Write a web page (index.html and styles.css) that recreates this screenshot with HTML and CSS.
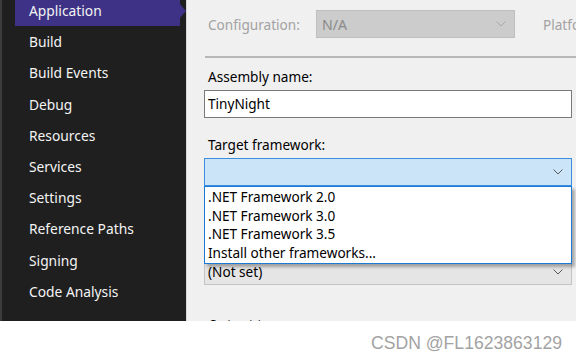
FILE: index.html
```html
<!DOCTYPE html>
<html lang="en">
<head>
<meta charset="utf-8">
<title>Application properties</title>
<link rel="stylesheet" href="styles.css">
</head>
<body>
<div class="window">
    <ul class="sidebar">
        <li class="on">Application</li>
        <li>Build</li>
        <li>Build Events</li>
        <li>Debug</li>
        <li>Resources</li>
        <li>Services</li>
        <li>Settings</li>
        <li>Reference Paths</li>
        <li>Signing</li>
        <li>Code Analysis</li>
    </ul>
    <div class="panel">
        <div class="config">
            <span class="config-label">Configuration:</span>
            <div class="combo disabled">
                <span>N/A</span>
                <svg width="10" height="6" viewBox="0 0 10 6"><polyline points="0.5,0.5 5,5 9.5,0.5" fill="none" stroke="#a8a8a8" stroke-width="1"/></svg>
            </div>
            <span class="config-label platform">Platform:</span>
        </div>
        <hr class="sep">
        <label class="field-label">Assembly name:</label>
        <div class="textbox">TinyNight</div>
        <label class="field-label">Target framework:</label>
        <div class="drop-wrap">
            <div class="combo selected">
                <span></span>
                <svg width="10" height="6" viewBox="0 0 10 6"><polyline points="0.5,0.5 5,5 9.5,0.5" fill="none" stroke="#5a5a5a" stroke-width="1"/></svg>
            </div>
            <ul class="droplist">
                <li>.NET Framework 2.0</li>
                <li>.NET Framework 3.0</li>
                <li>.NET Framework 3.5</li>
                <li>Install other frameworks...</li>
            </ul>
            <div class="combo plain">
                <span>(Not set)</span>
                <svg width="10" height="6" viewBox="0 0 10 6"><polyline points="0.5,0.5 5,5 9.5,0.5" fill="none" stroke="#5a5a5a" stroke-width="1"/></svg>
            </div>
        </div>
        <label class="field-label next">Output type:</label>
    </div>
</div>
<div class="footer">
    <div class="mark">CSDN @FL1623863129</div>
    <p class="cut">it should build the project and then install the target framework it lists</p>
</div>
</body>
</html>
```
FILE: styles.css
```css
body{ margin: 0; padding: 0; background: #fff; }
*{ box-sizing: border-box; }
ul{ margin: 0; padding: 0; list-style: none; }

.window{ display: flex; height: 321px; overflow: hidden; }

/* left nav */
.sidebar{
    width: 186px; flex: none; background: #1f1f1f; border-left: 2px solid #3c3c3c;
    padding: 0 6px 0 13px; margin-top: -5px;
    font-family: "Noto Sans", sans-serif; font-size: 13.8px; color: #f4f4f4;
}
.sidebar > li{ height: 31.2px; line-height: 31.2px; padding-left: 14px; }
.sidebar > li.on{ background: #3d3285; position: relative; }
.sidebar > li.on::after{
    content: ""; position: absolute; right: -6px; top: 9px;
    border-left: 6px solid #3d3285; border-top: 7px solid transparent; border-bottom: 7px solid transparent;
}

/* right panel */
.panel{
    flex: 1; background: #f0f0f0; border-left: 1px solid #d8d8d8;
    padding: 10px 0 0 17px;
    font-family: "Noto Sans", sans-serif; font-size: 13.6px; color: #000;
}
.config{ display: flex; align-items: center; height: 28px; }
.config-label{ color: #a2a2a2; width: 112px; padding-left: 4px; }
.config-label.platform{ width: auto; margin-left: 24px; white-space: nowrap; }
.sep{ margin: 18px 0 0 1px; border: 0; border-top: 2px solid #b8b8b8; height: 0; }

.field-label{ display: block; height: 20px; line-height: 20px; padding-left: 4px; margin-top: 9px; }
.field-label.next{ margin-top: 30px; }

.textbox{
    width: 368px; height: 28px; margin-top: 3px; background: #fff; border: 1px solid #7a7a7a;
    line-height: 26px; padding-left: 3px;
}
.textbox + .field-label{ margin-top: 17px; }

.combo{
    display: flex; align-items: center; justify-content: space-between;
    height: 28px; padding: 0 8px 0 3px; border: 1px solid #adadad;
}
.combo.disabled{ width: 199px; background: #cccccc; border-color: #bfbfbf; color: #8a8a8a; font-size: 14.2px; padding-left: 5px; }
.combo.selected{ width: 368px; height: 28px; background: #cce4f7; border-color: #3c8ddb; }
.combo.plain{ width: 368px; height: 27px; margin-top: 72px; background: #e5e5e5; border-color: #c4c4c4; }

.drop-wrap{ position: relative; margin-top: 3px; }
.droplist{
    position: absolute; left: 0; top: 28px; width: 368px; z-index: 2;
    background: #fff; border: 1px solid #1a7ad4; padding: 1px 0 1px 3px;
    box-shadow: 3px 3px 3px rgba(0,0,0,0.3);
}
.droplist > li{ height: 18.5px; line-height: 18.5px; }

/* below the screenshot */
.footer{ height: 38px; overflow: hidden; }
.mark{
    text-align: right; padding-right: 14px; padding-top: 12px;
    font-family: "Liberation Sans", Arial, sans-serif; font-size: 17.6px; color: #a3a3a3; line-height: 20px;
}
.cut{
    margin: 3px 0 0 8px; white-space: nowrap;
    font-family: "Liberation Sans", Arial, sans-serif; font-size: 17px; color: #222; line-height: 20px;
}
```
